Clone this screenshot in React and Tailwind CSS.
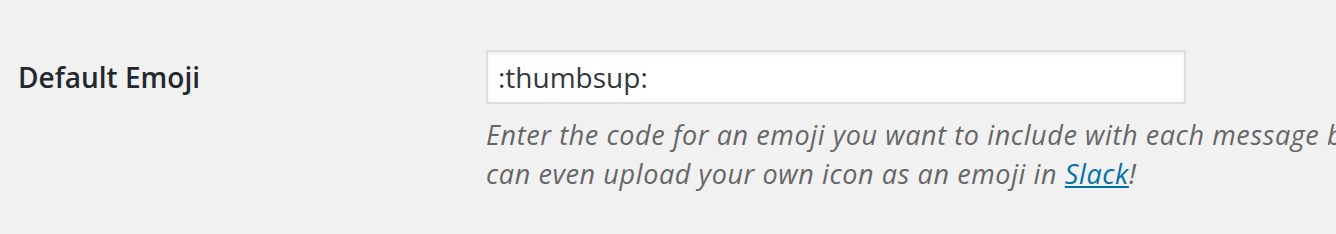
import React from 'react';

const App = () => {
    return (
        <div className="w-[1336px] h-[234px] overflow-hidden bg-[#f1f1f1] font-['Open_Sans',sans-serif]">
            <div className="flex items-start">
                {/* Label column */}
                <div className="w-[486px] shrink-0 pl-[18px] pt-[57px]">
                    <label className="text-[28px] leading-[40px] font-semibold text-[#23282d] whitespace-nowrap">
                        Default Emoji
                    </label>
                </div>
                {/* Field column */}
                <div className="pt-[50px]">
                    <input
                        type="text"
                        defaultValue=":thumbsup:"
                        className="block w-[700px] h-[54px] border-2 border-[#dddddd] bg-white px-[10px] text-[28px] leading-[40px] text-[#32373c] shadow-[inset_0_2px_4px_rgba(0,0,0,0.07)] outline-none font-['Open_Sans',sans-serif]"
                    />
                    <p className="mt-[11px] w-[1200px] text-[27px] leading-[39px] tracking-[0.6px] italic text-[#666666] whitespace-nowrap">
                        Enter the code for an emoji you want to include with each message by default. You
                        <br />
                        can even upload your own icon as an emoji in{' '}
                        <a href="#" className="text-[#0073aa] underline">Slack</a>!
                    </p>
                </div>
            </div>
        </div>
    );
};

export default App;
